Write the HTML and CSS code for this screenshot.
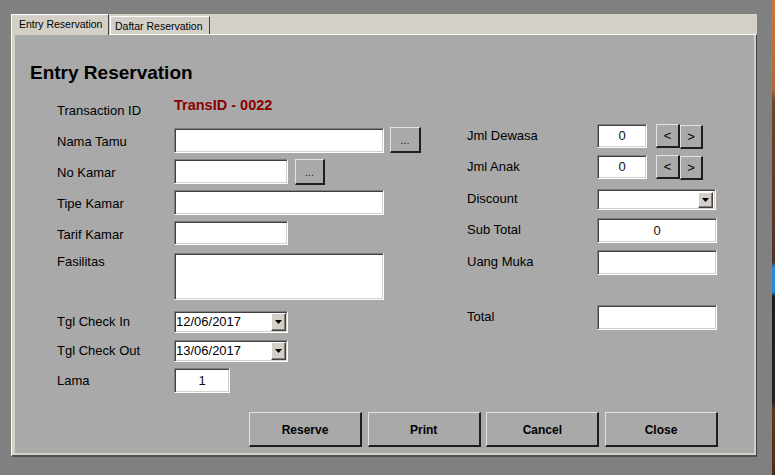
FILE: index.html
```html
<!DOCTYPE html>
<html lang="id">
<head>
<meta charset="utf-8">
<title>Entry Reservation</title>
<link rel="stylesheet" href="styles.css">
</head>
<body>
<div class="screen">
  <div class="window">
    <div class="tabctl">
      <div class="tabstrip">
        <div class="tab tab-active">Entry Reservation</div>
        <div class="tab tab-idle">Daftar Reservation</div>
      </div>
      <div class="panel">
        <div class="page">
          <h1 class="title">Entry Reservation</h1>
          <div class="form">
            <div class="col-left">
              <div class="row r-trans">
                <span class="label">Transaction ID</span>
                <span class="transid">TransID - 0022</span>
              </div>
              <div class="row r-nama">
                <span class="label">Nama Tamu</span>
                <div class="tb w210"></div>
                <button class="btn3d dots dots-nama">...</button>
              </div>
              <div class="row r-nokamar">
                <span class="label">No Kamar</span>
                <div class="tb w114"></div>
                <button class="btn3d dots dots-kamar">...</button>
              </div>
              <div class="row r-tipe">
                <span class="label">Tipe Kamar</span>
                <div class="tb w210"></div>
              </div>
              <div class="row r-tarif">
                <span class="label">Tarif Kamar</span>
                <div class="tb w114 h24"></div>
              </div>
              <div class="row r-fasilitas">
                <span class="label">Fasilitas</span>
                <div class="tb w210 tall"></div>
              </div>
              <div class="row r-checkin">
                <span class="label">Tgl Check In</span>
                <div class="picker">
                  <span class="value">12/06/2017</span>
                  <span class="drop"><svg width="7" height="4" viewBox="0 0 7 4"><path d="M0 0H7L3.5 4Z" fill="#000"/></svg></span>
                </div>
              </div>
              <div class="row r-checkout">
                <span class="label">Tgl Check Out</span>
                <div class="picker">
                  <span class="value">13/06/2017</span>
                  <span class="drop"><svg width="7" height="4" viewBox="0 0 7 4"><path d="M0 0H7L3.5 4Z" fill="#000"/></svg></span>
                </div>
              </div>
              <div class="row r-lama">
                <span class="label">Lama</span>
                <div class="tb w56 center">1</div>
              </div>
            </div>
            <div class="col-right">
              <div class="row r-dewasa">
                <span class="label">Jml Dewasa</span>
                <div class="tb w50 center">0</div>
                <button class="btn3d spin spin-lt">&lt;</button>
                <button class="btn3d spin spin-gt">&gt;</button>
              </div>
              <div class="row r-anak">
                <span class="label">Jml Anak</span>
                <div class="tb w50 center">0</div>
                <button class="btn3d spin spin-lt">&lt;</button>
                <button class="btn3d spin spin-gt">&gt;</button>
              </div>
              <div class="row r-discount">
                <span class="label">Discount</span>
                <div class="combo">
                  <span class="value"></span>
                  <span class="drop drop-sm"><svg width="7" height="4" viewBox="0 0 7 4"><path d="M0 0H7L3.5 4Z" fill="#000"/></svg></span>
                </div>
              </div>
              <div class="row r-subtotal">
                <span class="label">Sub Total</span>
                <div class="tb w120 center">0</div>
              </div>
              <div class="row r-uang">
                <span class="label">Uang Muka</span>
                <div class="tb w120"></div>
              </div>
              <div class="row r-total">
                <span class="label">Total</span>
                <div class="tb w120"></div>
              </div>
            </div>
          </div>
          <div class="actions">
            <button class="btn3d btn">Reserve</button>
            <button class="btn3d btn">Print</button>
            <button class="btn3d btn">Cancel</button>
            <button class="btn3d btn">Close</button>
          </div>
        </div>
      </div>
    </div>
  </div>
  <div class="desktop"></div>
</div>
</body>
</html>
```

FILE: styles.css
```css
html, body {
  margin: 0;
  padding: 0;
}

body {
  background: #808080;
  font-family: "Liberation Sans", Arial, sans-serif;
  color: #000;
}

.screen {
  display: flex;
  width: 775px;
  height: 475px;
  overflow: hidden;
}

.window {
  flex: none;
  width: 772px;
  height: 475px;
  box-sizing: border-box;
  padding: 14px 0 0 11px;
  background: #808080;
}

.desktop {
  flex: none;
  width: 3px;
  height: 475px;
  background: linear-gradient(to bottom,
    #c9763f 0, #b0693c 90px, #6b4633 100px, #4a3326 262px,
    #2d8ad6 268px, #2d8ad6 292px, #1c1c1c 296px, #222 400px,
    #5a3622 410px, #4a2c1c 475px);
}

/* ---------- tab control ---------- */
.tabctl {
  width: 746px;
  background: #d4d0c8;
}

.tabstrip {
  display: flex;
  align-items: flex-start;
  height: 20px;
}

.tab {
  box-sizing: border-box;
  display: flex;
  align-items: center;
  background: #d4d0c8;
  border-top: 1px solid #fff;
  border-left: 1px solid #fff;
  border-right: 1px solid #404040;
  font-size: 10.5px;
  white-space: nowrap;
}

.tab-active {
  position: relative;
  z-index: 1;
  width: 98px;
  height: 21px;
  padding: 0 0 2px 7px;
}

.tab-idle {
  width: 100px;
  height: 18px;
  margin: 2px 0 0 1px;
  padding: 0 0 0 4px;
}

.panel {
  box-sizing: border-box;
  height: 423px;
  background: #d4d0c8;
  border-top: 1px solid #fff;
  border-left: 1px solid #fff;
  border-right: 1px solid #404040;
  border-bottom: 2px solid #505050;
  padding: 0 2px 2px 3px;
}

.page {
  height: 418px;
  background: #a9a9a9;
}

/* ---------- content ---------- */
.title {
  margin: 0;
  padding: 27px 0 0 15px;
  font-size: 19px;
  line-height: 22px;
  font-weight: bold;
}

.form {
  display: flex;
  margin-top: 11px;
  padding-left: 42px;
}

.col-left {
  flex: none;
  width: 410px;
}

.col-right {
  flex: none;
}

.row {
  display: flex;
  align-items: center;
}

.label {
  flex: none;
  font-size: 13px;
  line-height: 16px;
  white-space: nowrap;
}

.col-left .label {
  width: 117px;
  margin-top: 2px;
}

.col-right .label {
  width: 130px;
  margin-top: -1px;
}

.r-trans {
  align-items: flex-start;
  height: 18px;
}

.r-trans .label {
  margin-top: 8px;
}

.transid {
  margin-top: 1px;
  font-size: 14.5px;
  line-height: 18px;
  font-weight: bold;
  color: #8b0000;
}

.r-nama     { margin-top: 15px; height: 25px; }
.r-nokamar  { margin-top: 6px;  height: 25px; }
.r-tipe     { margin-top: 6px;  height: 25px; }
.r-tarif    { margin-top: 6px;  height: 24px; }
.r-tarif .label { margin-top: 3px; }
.r-fasilitas{ margin-top: 8px;  height: 47px; align-items: flex-start; }
.r-fasilitas .label { margin-top: 1px; }
.r-checkin  { margin-top: 11px; height: 22px; }
.r-checkout { margin-top: 7px;  height: 22px; }
.r-lama     { margin-top: 6px;  height: 25px; }
.r-checkin .label,
.r-checkout .label,
.r-lama .label { margin-top: 0; }

.r-dewasa   { margin-top: 29px; height: 24px; }
.r-anak     { margin-top: 7px;  height: 24px; }
.r-discount { margin-top: 10px; height: 21px; }
.r-subtotal { margin-top: 8px;  height: 25px; }
.r-uang     { margin-top: 7px;  height: 25px; }
.r-total    { margin-top: 30px; height: 25px; }

/* ---------- text boxes ---------- */
.tb {
  box-sizing: border-box;
  flex: none;
  display: flex;
  align-items: center;
  height: 25px;
  background: #fff;
  border: 1px solid;
  border-color: #808080 #fff #fff #808080;
  box-shadow: inset 1px 1px 0 #404040, inset -1px -1px 0 #d4d0c8;
  font-size: 13px;
  line-height: 16px;
  color: #111;
}

.center {
  justify-content: center;
}

.w210 { width: 210px; }
.w114 { width: 114px; }
.w56  { width: 56px; }
.w50  { width: 50px; height: 24px; }
.w120 { width: 120px; }
.h24  { height: 24px; }
.tall { height: 47px; }

/* ---------- pickers / combos ---------- */
.picker,
.combo {
  box-sizing: border-box;
  flex: none;
  display: flex;
  align-items: center;
  background: #fff;
  border: 1px solid;
  border-color: #808080 #fff #fff #808080;
  box-shadow: inset 1px 1px 0 #404040, inset -1px -1px 0 #d4d0c8;
  font-size: 13px;
  line-height: 16px;
}

.picker {
  width: 114px;
  height: 22px;
  padding: 0 1px;
}

.combo {
  width: 119px;
  height: 21px;
  padding: 0 2px;
}

.value {
  flex: 1;
  white-space: nowrap;
}

.drop {
  box-sizing: border-box;
  flex: none;
  display: flex;
  align-items: center;
  justify-content: center;
  width: 15px;
  height: 18px;
  background: #d4d0c8;
  border: 1px solid;
  border-color: #fff #404040 #404040 #fff;
  box-shadow: inset -1px -1px 0 #808080;
}

.drop-sm {
  height: 16px;
}

/* ---------- buttons ---------- */
.btn3d {
  box-sizing: border-box;
  flex: none;
  appearance: none;
  -webkit-appearance: none;
  margin: 0;
  padding: 0;
  display: flex;
  align-items: center;
  justify-content: center;
  background: #a9a9a9;
  border-style: solid;
  border-width: 1px 2px 2px 1px;
  border-color: #e2e2e2 #1e1e1e #1e1e1e #e2e2e2;
  font-family: inherit;
  color: #000;
}

.dots {
  width: 31px;
  height: 26px;
  font-size: 11px;
  line-height: 12px;
  color: #222;
}

.dots-nama {
  margin: -1px 0 0 6px;
}

.dots-kamar {
  width: 30px;
  margin: 1px 0 0 7px;
}

.spin {
  width: 24px;
  height: 24px;
  font-size: 13px;
  line-height: 14px;
}

.spin-lt {
  margin-left: 9px;
}

.spin-gt {
  width: 23px;
  margin-top: 2px;
}

.actions {
  display: flex;
  gap: 5.67px;
  margin-top: 19px;
  padding-left: 234px;
}

.btn {
  width: 113px;
  height: 35px;
  padding-top: 2px;
  font-size: 12px;
  font-weight: bold;
}
```
